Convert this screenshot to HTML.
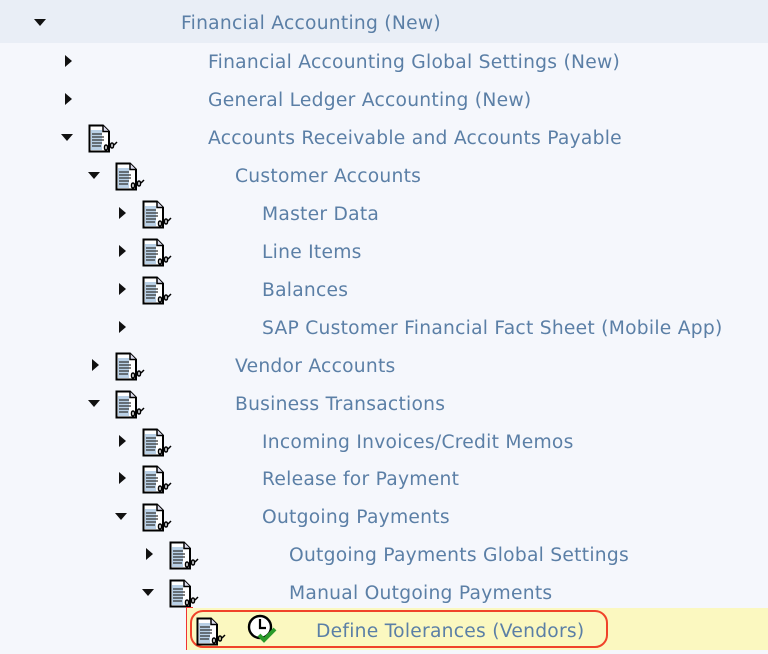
<!DOCTYPE html>
<html><head><meta charset="utf-8"><style>
body{margin:0;width:768px;height:654px;background:#f5f7fc;position:relative;overflow:hidden;font-family:"DejaVu Sans","Liberation Sans",sans-serif;}
.top{position:absolute;left:0;top:0;width:768px;height:43px;background:#e9eef6;}
.hl{position:absolute;left:187px;top:608px;width:581px;height:42px;background:#fbf8c0;}
.ring{position:absolute;left:190px;top:610px;width:418px;height:38px;border:2px solid #f0432a;border-radius:13px;box-sizing:border-box;}
.t{position:absolute;font-size:18.7px;color:#5b7fa6;white-space:nowrap;line-height:22px;letter-spacing:0.25px;margin-top:1px}
.ar{position:absolute;width:0;height:0}
.r{border-top:6px solid transparent;border-bottom:6px solid transparent;border-left:7px solid #111;}
.d{border-left:6px solid transparent;border-right:6px solid transparent;border-top:7px solid #111;}
svg.i{position:absolute;width:31px;height:29px}
</style></head><body>
<div class="top"></div>
<div class="hl"></div>
<div class="ring"></div>
<svg width="0" height="0" style="position:absolute"><defs>
<g id="doc"><path d="M1.5 1.5H15L21 7.5V27V27.5H1.5Z" fill="#fff" stroke="#000" stroke-width="2"/><path d="M15 1.5V7.5H21" fill="#dde" stroke="#000" stroke-width="1.5"/><rect x="3" y="6" width="11" height="20" fill="#b9d0e6"/><path d="M4 10h10M4 13h12M4 16h12M4 19h10M4 22h9" stroke="#333" stroke-width="1.3"/><path d="M18 21c-2 0-2 5 0 5s2-5 0-5zM24 19c-2 0-2 5 0 5s2-5 0-5zM20 23h2M26 21l3-3" fill="none" stroke="#000" stroke-width="1.5"/></g>
</defs></svg>
<div class="ar d" style="left:34px;top:19px"></div>
<div class="t" style="left:181px;top:12px">Financial Accounting (New)</div>

<div class="ar r" style="left:65px;top:55px"></div>
<div class="t" style="left:208px;top:51px">Financial Accounting Global Settings (New)</div>
<div class="ar r" style="left:65px;top:93px"></div>
<div class="t" style="left:208px;top:89px">General Ledger Accounting (New)</div>
<div class="ar d" style="left:61px;top:134px"></div>
<svg class="i" style="left:88px;top:124px"><use href="#doc"/></svg>
<div class="t" style="left:208px;top:127px">Accounts Receivable and Accounts Payable</div>

<div class="ar d" style="left:88px;top:172px"></div>
<svg class="i" style="left:115px;top:162px"><use href="#doc"/></svg>
<div class="t" style="left:235px;top:165px">Customer Accounts</div>

<div class="ar r" style="left:119px;top:207px"></div>
<svg class="i" style="left:142px;top:200px"><use href="#doc"/></svg>
<div class="t" style="left:262px;top:203px">Master Data</div>
<div class="ar r" style="left:119px;top:245px"></div>
<svg class="i" style="left:142px;top:238px"><use href="#doc"/></svg>
<div class="t" style="left:262px;top:241px">Line Items</div>
<div class="ar r" style="left:119px;top:283px"></div>
<svg class="i" style="left:142px;top:276px"><use href="#doc"/></svg>
<div class="t" style="left:262px;top:279px">Balances</div>
<div class="ar r" style="left:119px;top:321px"></div>
<div class="t" style="left:262px;top:317px">SAP Customer Financial Fact Sheet (Mobile App)</div>

<div class="ar r" style="left:92px;top:359px"></div>
<svg class="i" style="left:115px;top:352px"><use href="#doc"/></svg>
<div class="t" style="left:235px;top:355px">Vendor Accounts</div>
<div class="ar d" style="left:88px;top:400px"></div>
<svg class="i" style="left:115px;top:390px"><use href="#doc"/></svg>
<div class="t" style="left:235px;top:393px">Business Transactions</div>

<div class="ar r" style="left:119px;top:435px"></div>
<svg class="i" style="left:142px;top:428px"><use href="#doc"/></svg>
<div class="t" style="left:262px;top:431px">Incoming Invoices/Credit Memos</div>
<div class="ar r" style="left:119px;top:472px"></div>
<svg class="i" style="left:142px;top:465px"><use href="#doc"/></svg>
<div class="t" style="left:262px;top:468px">Release for Payment</div>
<div class="ar d" style="left:115px;top:513px"></div>
<svg class="i" style="left:142px;top:503px"><use href="#doc"/></svg>
<div class="t" style="left:262px;top:506px">Outgoing Payments</div>

<div class="ar r" style="left:146px;top:548px"></div>
<svg class="i" style="left:169px;top:541px"><use href="#doc"/></svg>
<div class="t" style="left:289px;top:544px">Outgoing Payments Global Settings</div>
<div class="ar d" style="left:142px;top:589px"></div>
<svg class="i" style="left:169px;top:579px"><use href="#doc"/></svg>
<div class="t" style="left:289px;top:582px">Manual Outgoing Payments</div>

<div style="position:absolute;left:186px;top:607px;width:6px;height:42px;border-left:1px solid #e33;border-top:1px solid #e33;"></div>
<svg class="i" style="left:196px;top:617px"><use href="#doc"/></svg>
<svg style="position:absolute;left:247px;top:614px" width="34" height="30"><circle cx="13" cy="13" r="11" fill="#fff" stroke="#000" stroke-width="2.4"/><path d="M13 5V14H19" stroke="#000" stroke-width="2.2" fill="none"/><path d="M12 21l5 5 11-11" stroke="#2a9a2a" stroke-width="4" fill="none"/></svg>
<div class="t" style="left:316px;top:620px">Define Tolerances (Vendors)</div>
</body></html>
